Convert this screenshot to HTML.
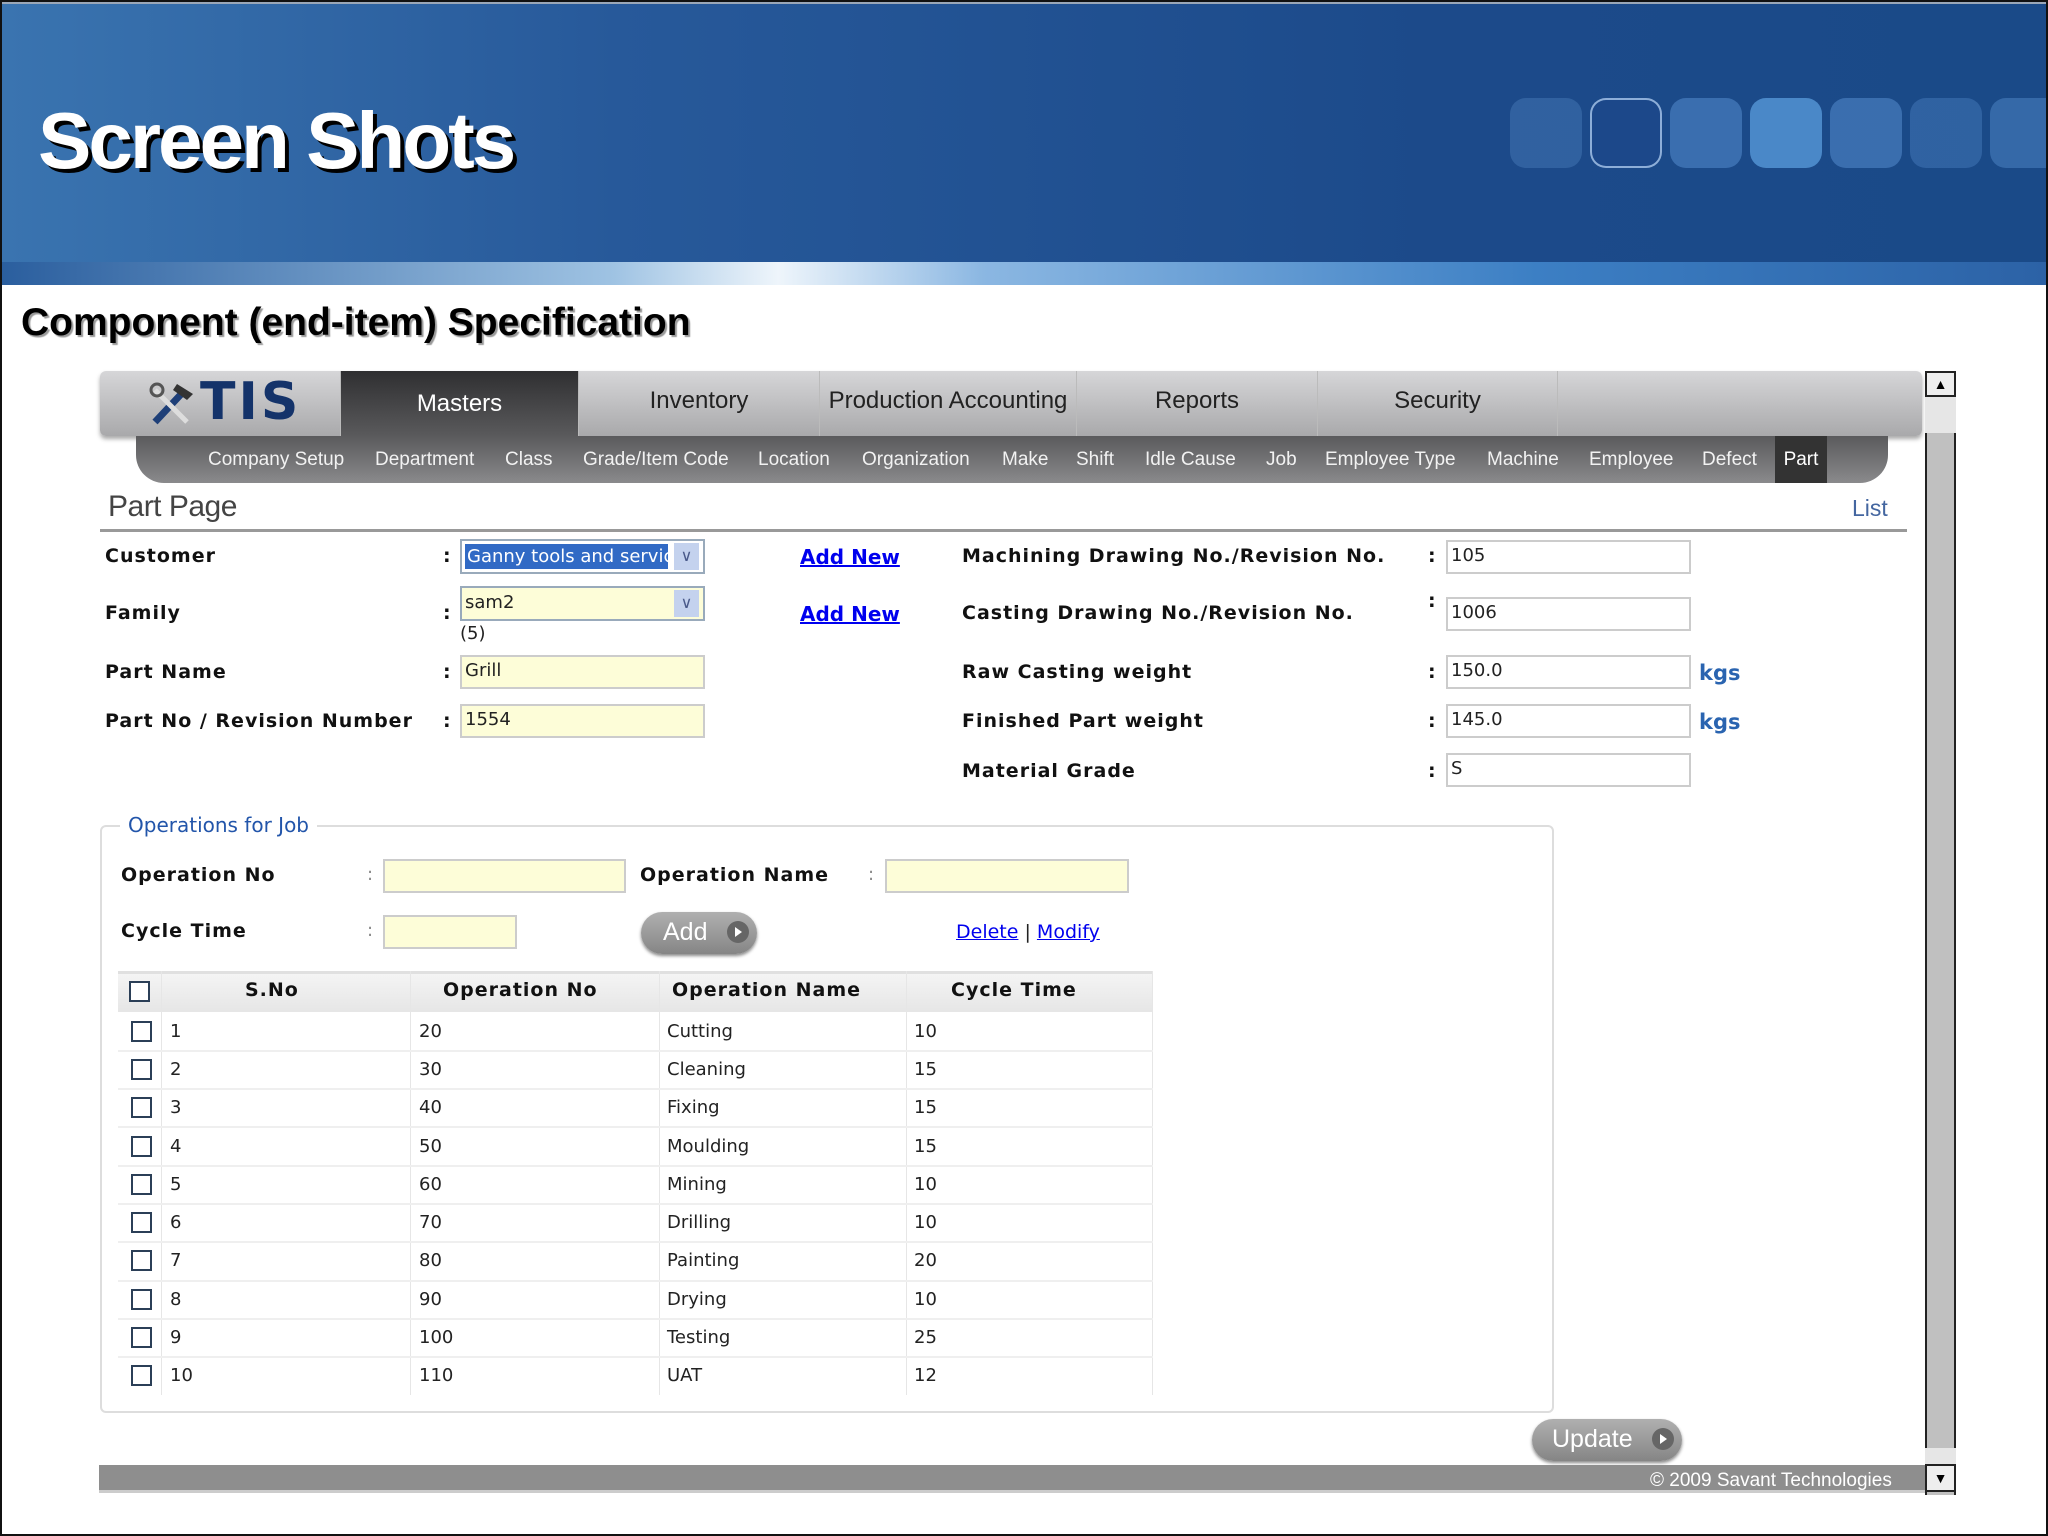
<!DOCTYPE html>
<html><head><meta charset="utf-8"><style>
*{margin:0;padding:0;box-sizing:border-box}
body{width:2048px;height:1536px;position:relative;background:#fff;overflow:hidden;font-family:"Liberation Sans",sans-serif}
.a{position:absolute}
.hdr{left:0;top:0;width:2048px;height:285px;background:linear-gradient(90deg,#3a74b0 0%,#27599a 30%,#1c4a8a 70%,#1a4a88 100%);border-top:4px solid #9aa7b8}
.band{left:0;top:262px;width:2048px;height:23px;background:linear-gradient(90deg,#2a5e9e 0%,#9fc3e3 30%,#eef5fb 38%,#8bb7e2 48%,#3c7fc4 75%,#2c62a6 100%)}
.sq{top:98px;width:72px;height:70px;border-radius:16px}
.t1{left:38px;top:95px;font:bold 80px "Liberation Sans",sans-serif;color:#fff;letter-spacing:-3px;text-shadow:4px 4px 0 #000}
.t2{left:21px;top:301px;font:bold 39px "Liberation Sans",sans-serif;color:#000;letter-spacing:0;text-shadow:2px 2px 1px #999}
.nav{left:100px;top:371px;width:1822px;height:65px;background:linear-gradient(#d6d6d8,#a9a9ab);border-radius:6px;box-shadow:0 3px 4px #aaa}
.tab{top:371px;height:65px;font-size:24px;color:#222;text-align:center;line-height:60px;border-left:1px solid #bbb}
.sub{left:136px;top:436px;width:1752px;height:47px;background:linear-gradient(#5a5a5c,#8a8a8c);border-radius:0 0 28px 28px}
.si{top:436px;height:47px;line-height:47px;font-size:19px;color:#f2f2f2}
.lbl{font:bold 19px "DejaVu Sans",sans-serif;color:#111;letter-spacing:1px}
.col{font:bold 19px "DejaVu Sans",sans-serif;color:#111}
.inp{height:32px;border:2px solid #ccc;background:#fff;font:18px "DejaVu Sans",sans-serif;color:#222;padding-left:3px;line-height:28px}
.y{background:#fdfdd8}
.lnk{font:bold 20px "DejaVu Sans",sans-serif;color:#0000ee;text-decoration:underline}
.kg{font:bold 21px "DejaVu Sans",sans-serif;color:#2a64b0}
.btn{border-radius:22px;background:linear-gradient(#b0b0b0,#858585);color:#fff;font-size:25px;box-shadow:0 2px 3px #888}
.btn i{position:absolute;right:8px;top:9px;width:22px;height:22px;border-radius:50%;background:#666}
.btn i:after{content:"";position:absolute;left:8px;top:6px;border-left:7px solid #fff;border-top:5px solid transparent;border-bottom:5px solid transparent}
.tc{font:18px "DejaVu Sans",sans-serif;color:#222}
.cb{width:21px;height:21px;border:2px solid #2b3f57;background:#fff}
</style></head><body>
<div class="a hdr"></div>
<div class="a band"></div>
<div class="a sq" style="left:1510px;background:rgba(90,140,200,.35)"></div>
<div class="a sq" style="left:1590px;border:2px solid rgba(170,200,235,.8);background:rgba(30,70,140,.4)"></div>
<div class="a sq" style="left:1670px;background:rgba(80,135,200,.6)"></div>
<div class="a sq" style="left:1750px;background:#4a88c8"></div>
<div class="a sq" style="left:1830px;background:rgba(80,135,200,.6)"></div>
<div class="a sq" style="left:1910px;background:rgba(80,135,200,.4)"></div>
<div class="a sq" style="left:1990px;background:rgba(80,135,200,.5)"></div>
<div class="a t1">Screen Shots</div>
<div class="a t2">Component (end-item) Specification</div>

<div class="a nav"></div>
<div class="a" style="left:147px;top:380px;width:50px;height:48px">
<svg width="50" height="48" viewBox="0 0 50 48"><path d="M8 42 L38 10" stroke="#1e3f78" stroke-width="7"/><path d="M8 10 L40 42" stroke="#ddd" stroke-width="5"/><path d="M30 4 L46 14 L40 20 L26 10Z" fill="#333"/><circle cx="10" cy="10" r="6" fill="none" stroke="#555" stroke-width="3"/></svg></div>
<div class="a" style="left:200px;top:372px;font:bold 52px 'DejaVu Sans',sans-serif;color:#14336a;letter-spacing:3px">TIS</div>
<div class="a tab" style="left:340px;width:238px;background:linear-gradient(#2f2f31,#5a5a5c);color:#fff;line-height:66px">Masters</div>
<div class="a tab" style="left:578px;width:241px">Inventory</div>
<div class="a tab" style="left:819px;width:257px">Production Accounting</div>
<div class="a tab" style="left:1076px;width:241px">Reports</div>
<div class="a tab" style="left:1317px;width:241px;border-right:1px solid #bbb">Security</div>
<div class="a sub"></div>
<div class="a si" style="left:208px">Company Setup</div>
<div class="a si" style="left:375px">Department</div>
<div class="a si" style="left:505px">Class</div>
<div class="a si" style="left:583px">Grade/Item Code</div>
<div class="a si" style="left:758px">Location</div>
<div class="a si" style="left:862px">Organization</div>
<div class="a si" style="left:1002px">Make</div>
<div class="a si" style="left:1076px">Shift</div>
<div class="a si" style="left:1145px">Idle Cause</div>
<div class="a si" style="left:1266px">Job</div>
<div class="a si" style="left:1325px">Employee Type</div>
<div class="a si" style="left:1487px">Machine</div>
<div class="a si" style="left:1589px">Employee</div>
<div class="a si" style="left:1702px">Defect</div>
<div class="a si" style="left:1775px;width:52px;background:#333;color:#fff;text-align:center">Part</div>

<div class="a" style="left:1925px;top:371px;width:31px;height:1124px;background:#c0c0c0;border-left:2px solid #222;border-right:2px solid #222"></div>
<div class="a" style="left:1925px;top:371px;width:31px;height:26px;background:#eee;border:2px solid #222;font-size:14px;text-align:center;line-height:22px">▲</div>
<div class="a" style="left:1925px;top:397px;width:31px;height:36px;background:#e6e6e6"></div>
<div class="a" style="left:1925px;top:1448px;width:31px;height:16px;background:#e6e6e6"></div>
<div class="a" style="left:1925px;top:1464px;width:31px;height:28px;background:#eee;border:2px solid #222;font-size:14px;text-align:center;line-height:24px">▼</div>

<div class="a" style="left:108px;top:490px;font-size:30px;color:#444;letter-spacing:-0.5px">Part Page</div>
<div class="a" style="left:1852px;top:495px;font-size:23px;color:#4466a0">List</div>
<div class="a" style="left:100px;top:529px;width:1807px;height:3px;background:#999"></div>

<div class="a lbl" style="left:105px;top:545px">Customer</div>
<div class="a lbl" style="left:105px;top:602px">Family</div>
<div class="a lbl" style="left:105px;top:661px">Part Name</div>
<div class="a lbl" style="left:105px;top:710px">Part No / Revision Number</div>
<div class="a col" style="left:443px;top:545px">:</div>
<div class="a col" style="left:443px;top:602px">:</div>
<div class="a col" style="left:443px;top:661px">:</div>
<div class="a col" style="left:443px;top:710px">:</div>
<div class="a inp" style="left:460px;top:539px;width:245px;height:35px;border-color:#9ab;padding:3px"><div style="background:#316ac5;color:#fff;height:25px;width:203px;line-height:25px;overflow:hidden;white-space:nowrap;font-size:18px;padding-left:2px">Ganny tools and services</div></div>
<div class="a" style="left:674px;top:543px;width:25px;height:27px;background:#c4d2ee;color:#4a5a8a;font-size:16px;text-align:center;line-height:27px">&#8744;</div>
<div class="a inp y" style="left:460px;top:586px;width:245px;height:35px;border-color:#9ab;line-height:30px">sam2</div>
<div class="a" style="left:674px;top:590px;width:25px;height:27px;background:#c4d2ee;color:#4a5a8a;font-size:16px;text-align:center;line-height:27px">&#8744;</div>
<div class="a tc" style="left:460px;top:623px">(5)</div>
<div class="a inp y" style="left:460px;top:655px;width:245px;height:34px">Grill</div>
<div class="a inp y" style="left:460px;top:704px;width:245px;height:34px">1554</div>
<div class="a lnk" style="left:800px;top:545px">Add New</div>
<div class="a lnk" style="left:800px;top:602px">Add New</div>

<div class="a lbl" style="left:962px;top:545px">Machining Drawing No./Revision No.</div>
<div class="a lbl" style="left:962px;top:602px">Casting Drawing No./Revision No.</div>
<div class="a lbl" style="left:962px;top:661px">Raw Casting weight</div>
<div class="a lbl" style="left:962px;top:710px">Finished Part weight</div>
<div class="a lbl" style="left:962px;top:760px">Material Grade</div>
<div class="a col" style="left:1428px;top:545px">:</div>
<div class="a col" style="left:1428px;top:590px">:</div>
<div class="a col" style="left:1428px;top:661px">:</div>
<div class="a col" style="left:1428px;top:710px">:</div>
<div class="a col" style="left:1428px;top:760px">:</div>
<div class="a inp" style="left:1446px;top:540px;width:245px;height:34px">105</div>
<div class="a inp" style="left:1446px;top:597px;width:245px;height:34px">1006</div>
<div class="a inp" style="left:1446px;top:655px;width:245px;height:34px">150.0</div>
<div class="a inp" style="left:1446px;top:704px;width:245px;height:34px">145.0</div>
<div class="a inp" style="left:1446px;top:753px;width:245px;height:34px">S</div>
<div class="a kg" style="left:1699px;top:661px">kgs</div>
<div class="a kg" style="left:1699px;top:710px">kgs</div>

<div class="a" style="left:100px;top:825px;width:1454px;height:588px;border:2px solid #ddd;border-radius:6px"></div>
<div class="a" style="left:120px;top:813px;background:#fff;padding:0 8px;font:20px 'DejaVu Sans',sans-serif;color:#2255aa">Operations for Job</div>
<div class="a lbl" style="left:121px;top:864px">Operation No</div>
<div class="a lbl" style="left:640px;top:864px">Operation Name</div>
<div class="a lbl" style="left:121px;top:920px">Cycle Time</div>
<div class="a tc" style="left:367px;top:864px;color:#888">:</div>
<div class="a tc" style="left:868px;top:864px;color:#888">:</div>
<div class="a tc" style="left:367px;top:920px;color:#888">:</div>
<div class="a inp y" style="left:383px;top:859px;width:243px;height:34px"></div>
<div class="a inp y" style="left:885px;top:859px;width:244px;height:34px"></div>
<div class="a inp y" style="left:383px;top:915px;width:134px;height:34px"></div>
<div class="a btn" style="left:641px;top:912px;width:116px;height:42px;line-height:40px;padding-left:22px">Add<i></i></div>
<div class="a" style="left:956px;top:921px;font:19px 'DejaVu Sans',sans-serif;color:#222"><span style="color:#0000ee;text-decoration:underline">Delete</span> | <span style="color:#0000ee;text-decoration:underline">Modify</span></div>

<div class="a" style="left:118px;top:971px;width:1035px;height:41px;background:linear-gradient(#f4f4f4,#e6e6e6);border-top:3px solid #e0e0e0"></div>
<div class="a cb" style="left:129px;top:981px"></div>
<div class="a lbl" style="left:245px;top:979px">S.No</div>
<div class="a lbl" style="left:443px;top:979px">Operation No</div>
<div class="a lbl" style="left:672px;top:979px">Operation Name</div>
<div class="a lbl" style="left:951px;top:979px">Cycle Time</div>
<div class="a" style="left:161px;top:971px;width:1px;height:424px;background:#e6e6e6"></div>
<div class="a" style="left:410px;top:971px;width:1px;height:424px;background:#e6e6e6"></div>
<div class="a" style="left:659px;top:971px;width:1px;height:424px;background:#e6e6e6"></div>
<div class="a" style="left:906px;top:971px;width:1px;height:424px;background:#e6e6e6"></div>
<div class="a" style="left:1152px;top:971px;width:1px;height:424px;background:#e6e6e6"></div>
<div class="a cb" style="left:131px;top:1021px"></div><div class="a tc" style="left:170px;top:1021px">1</div><div class="a tc" style="left:419px;top:1021px">20</div><div class="a tc" style="left:667px;top:1021px">Cutting</div><div class="a tc" style="left:914px;top:1021px">10</div><div class="a" style="left:118px;top:1050px;width:1035px;height:2px;background:#efefef"></div>
<div class="a cb" style="left:131px;top:1059px"></div><div class="a tc" style="left:170px;top:1059px">2</div><div class="a tc" style="left:419px;top:1059px">30</div><div class="a tc" style="left:667px;top:1059px">Cleaning</div><div class="a tc" style="left:914px;top:1059px">15</div><div class="a" style="left:118px;top:1088px;width:1035px;height:2px;background:#efefef"></div>
<div class="a cb" style="left:131px;top:1097px"></div><div class="a tc" style="left:170px;top:1097px">3</div><div class="a tc" style="left:419px;top:1097px">40</div><div class="a tc" style="left:667px;top:1097px">Fixing</div><div class="a tc" style="left:914px;top:1097px">15</div><div class="a" style="left:118px;top:1126px;width:1035px;height:2px;background:#efefef"></div>
<div class="a cb" style="left:131px;top:1136px"></div><div class="a tc" style="left:170px;top:1136px">4</div><div class="a tc" style="left:419px;top:1136px">50</div><div class="a tc" style="left:667px;top:1136px">Moulding</div><div class="a tc" style="left:914px;top:1136px">15</div><div class="a" style="left:118px;top:1165px;width:1035px;height:2px;background:#efefef"></div>
<div class="a cb" style="left:131px;top:1174px"></div><div class="a tc" style="left:170px;top:1174px">5</div><div class="a tc" style="left:419px;top:1174px">60</div><div class="a tc" style="left:667px;top:1174px">Mining</div><div class="a tc" style="left:914px;top:1174px">10</div><div class="a" style="left:118px;top:1203px;width:1035px;height:2px;background:#efefef"></div>
<div class="a cb" style="left:131px;top:1212px"></div><div class="a tc" style="left:170px;top:1212px">6</div><div class="a tc" style="left:419px;top:1212px">70</div><div class="a tc" style="left:667px;top:1212px">Drilling</div><div class="a tc" style="left:914px;top:1212px">10</div><div class="a" style="left:118px;top:1241px;width:1035px;height:2px;background:#efefef"></div>
<div class="a cb" style="left:131px;top:1250px"></div><div class="a tc" style="left:170px;top:1250px">7</div><div class="a tc" style="left:419px;top:1250px">80</div><div class="a tc" style="left:667px;top:1250px">Painting</div><div class="a tc" style="left:914px;top:1250px">20</div><div class="a" style="left:118px;top:1280px;width:1035px;height:2px;background:#efefef"></div>
<div class="a cb" style="left:131px;top:1289px"></div><div class="a tc" style="left:170px;top:1289px">8</div><div class="a tc" style="left:419px;top:1289px">90</div><div class="a tc" style="left:667px;top:1289px">Drying</div><div class="a tc" style="left:914px;top:1289px">10</div><div class="a" style="left:118px;top:1318px;width:1035px;height:2px;background:#efefef"></div>
<div class="a cb" style="left:131px;top:1327px"></div><div class="a tc" style="left:170px;top:1327px">9</div><div class="a tc" style="left:419px;top:1327px">100</div><div class="a tc" style="left:667px;top:1327px">Testing</div><div class="a tc" style="left:914px;top:1327px">25</div><div class="a" style="left:118px;top:1356px;width:1035px;height:2px;background:#efefef"></div>
<div class="a cb" style="left:131px;top:1365px"></div><div class="a tc" style="left:170px;top:1365px">10</div><div class="a tc" style="left:419px;top:1365px">110</div><div class="a tc" style="left:667px;top:1365px">UAT</div><div class="a tc" style="left:914px;top:1365px">12</div>

<div class="a btn" style="left:1532px;top:1419px;width:150px;height:42px;line-height:40px;padding-left:20px">Update<i></i></div>
<div class="a" style="left:99px;top:1465px;width:1826px;height:28px;background:#8e8e8e;border-bottom:3px solid #ccc"></div>
<div class="a" style="left:1650px;top:1470px;font-size:19px;color:#fff">© 2009 Savant Technologies</div>
<div class="a" style="left:0;top:0;width:2048px;height:1536px;border:2px solid #111;pointer-events:none"></div>
</body></html>
